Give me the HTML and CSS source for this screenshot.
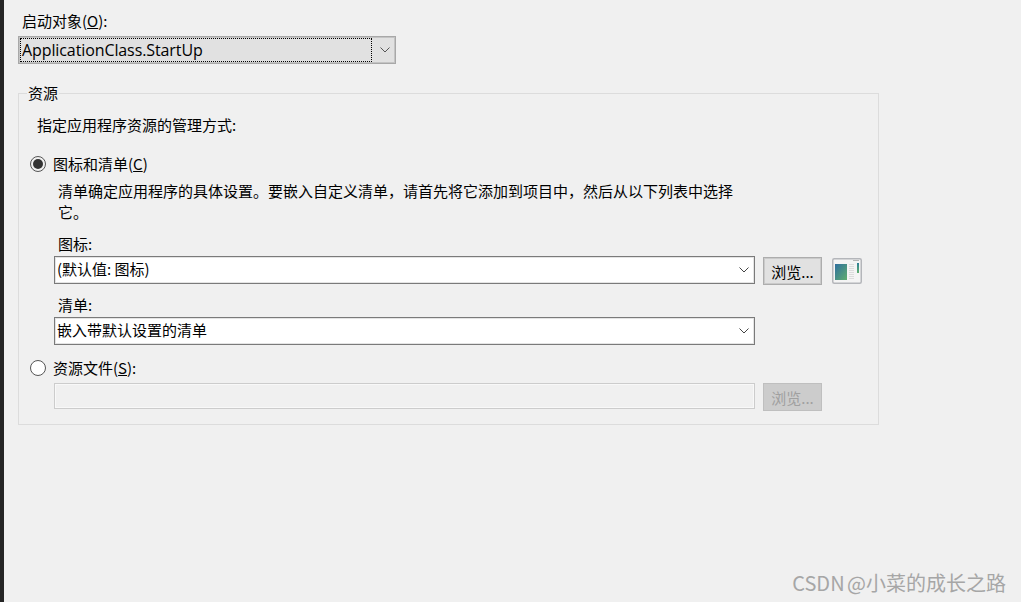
FILE: index.html
```html
<!DOCTYPE html>
<html lang="zh-CN">
<head>
<meta charset="utf-8">
<title>资源</title>
<link rel="stylesheet" href="styles.css">
</head>
<body>
<main class="page">
  <label class="label startup-label">启动对象(<u>O</u>):</label>
  <div class="startup-combo">
    <span class="focus-box">ApplicationClass.StartUp</span>
    <svg class="chevron" width="10" height="6" viewBox="0 0 10 6"><path d="M.5.5l4.500 4.500 4.500-4.500" fill="none" stroke="#555" stroke-width="1"/></svg>
  </div>
  <fieldset class="group">
    <legend class="legend">资源</legend>
    <p class="label intro">指定应用程序资源的管理方式:</p>
    <div class="radio-row first-radio">
      <span class="radio checked"></span>
      <span class="label">图标和清单(<u>C</u>)</span>
    </div>
    <div class="indented">
      <p class="label desc">清单确定应用程序的具体设置。要嵌入自定义清单，请首先将它添加到项目中，然后从以下列表中选择它。</p>
      <div class="label field-label icon-label">图标:</div>
      <div class="field-row">
        <div class="combo">
          <span class="combo-text">(默认值: 图标)</span>
          <svg class="chevron" width="10" height="6" viewBox="0 0 10 6"><path d="M.5.5l4.500 4.500 4.500-4.500" fill="none" stroke="#444" stroke-width="1"/></svg>
        </div>
        <button class="browse" type="button">浏览...</button>
        <svg class="preview" width="30" height="26" viewBox="0 0 30 26">
          <defs>
            <linearGradient id="g" x1="0" y1="0" x2="1" y2="1">
              <stop offset="0" stop-color="#2f6f9f"/>
              <stop offset="1" stop-color="#5fae6e"/>
            </linearGradient>
            <linearGradient id="h" x1="0" y1="0" x2="0" y2="1">
              <stop offset="0" stop-color="#2f7f96"/>
              <stop offset="1" stop-color="#5fae6e"/>
            </linearGradient>
          </defs>
          <rect x="0.75" y="0.75" width="28.500" height="24.500" rx="1.500" fill="#f4f4f4" stroke="#b4b6ba" stroke-width="1.500"/>
          <rect x="3" y="6" width="12" height="16" fill="url(#g)"/>
          <path d="M17 6.500h5M17 8.500h5M17 10.500h5M17 12.500h5M17 14.500h5M17 16.500h5M17 18.500h5M17 20.500h5" stroke="#dcdcdc" stroke-width="1"/>
          <rect x="25" y="5" width="2" height="10" fill="url(#h)"/>
          <rect x="21" y="2" width="6" height="1" fill="#b5b5b5"/>
        </svg>
      </div>
      <div class="label field-label manifest-label">清单:</div>
      <div class="field-row">
        <div class="combo">
          <span class="combo-text">嵌入带默认设置的清单</span>
          <svg class="chevron" width="10" height="6" viewBox="0 0 10 6"><path d="M.5.5l4.500 4.500 4.500-4.500" fill="none" stroke="#444" stroke-width="1"/></svg>
        </div>
      </div>
    </div>
    <div class="radio-row second-radio">
      <span class="radio"></span>
      <span class="label">资源文件(<u>S</u>):</span>
    </div>
    <div class="indented">
      <div class="field-row disabled-row">
        <div class="text-disabled"></div>
        <button class="browse disabled" type="button" disabled>浏览...</button>
      </div>
    </div>
  </fieldset>
  <div class="watermark">CSDN @小菜的成长之路</div>
</main>
</body>
</html>
```

FILE: styles.css
```css
* { box-sizing: border-box; }
html, body { margin: 0; height: 100%; }
body {
  background: #f0f0f0;
  color: #000;
  font-family: "Open Sans", "Noto Sans CJK SC", sans-serif;
  font-size: 15px;
  overflow: hidden;
}
.page {
  position: relative;
  height: 602px;
  border-left: 4px solid #252525;
  padding: 11px 0 0 14px;
}
.label {
  display: block;
  margin: 0;
  font-size: 15px;
  line-height: 20px;
  font-family: "Noto Sans CJK SC", sans-serif;
}
.startup-label { padding-left: 4px; }
.startup-combo {
  display: flex;
  align-items: center;
  width: 378px;
  height: 28px;
  margin-top: 5px;
  padding-left: 1px;
  background: #e1e1e1;
  border: 1px solid #a8a8a8;
  box-shadow: inset 0 0 0 1px #c4c4c4;
}
.focus-box {
  display: block;
  width: 352px;
  height: 24px;
  padding-left: 2px;
  outline: 1px dotted #000;
  outline-offset: -1px;
  font-size: 16px;
  line-height: 24px;
  letter-spacing: -0.1px;
}
.chevron { flex: none; }
.startup-combo .chevron { margin-left: 8px; }
.group {
  width: 861px;
  height: 341px;
  margin: 20px 0 0;
  padding: 0 0 0 18px;
  border: 1px solid #dcdcdc;
  position: relative;
}
.legend {
  margin-left: -10px;
  padding: 0 1px;
  font-family: "Noto Sans CJK SC", sans-serif;
  font-size: 15px;
  line-height: 18px;
}
.intro { margin-top: 13px; }
.radio-row {
  display: flex;
  align-items: center;
  gap: 7px;
  margin-left: -7px;
}
.first-radio { margin-top: 19px; }
.second-radio { margin-top: 13px; }
.radio {
  width: 16px;
  height: 16px;
  flex: none;
  border-radius: 50%;
  border: 1px solid #555;
  background: #fff;
  position: relative;
}
.radio.checked { background: #f0f0f0; }
.radio.checked::after {
  content: "";
  position: absolute;
  inset: 2px;
  border-radius: 50%;
  background: #333;
}
.indented { padding-left: 17px; margin-left: 0; }
.desc {
  width: 680px;
  margin: 6px 0 0 4px;
  line-height: 21px;
}
.field-label { padding-left: 4px; }
.icon-label { margin-top: 12px; }
.manifest-label { margin-top: 10px; }
.field-row {
  display: flex;
  align-items: flex-start;
  margin-top: 2px;
}
.combo {
  display: flex;
  align-items: center;
  justify-content: space-between;
  width: 701px;
  height: 28px;
  padding: 0 5px 0 2px;
  background: #fff;
  border: 1px solid #7a7a7a;
  box-shadow: inset 0 0 0 1px #e4e4e4;
  font-family: "Noto Sans CJK SC", sans-serif;
  font-size: 15px;
}
.combo-text { margin-bottom: 3px; }
.browse {
  width: 59px;
  height: 28px;
  margin: 1px 0 0 8px;
  padding: 0;
  background: #e1e1e1;
  border: 1px solid #adadad;
  box-shadow: inset 0 0 0 1px #cacaca;
  color: #000;
  font-family: "Noto Sans CJK SC", sans-serif;
  font-size: 15px;
}
.preview { margin: 2px 0 0 10px; flex: none; }
.disabled-row { margin-top: 5px; }
.text-disabled {
  width: 701px;
  height: 26px;
  background: #f0f0f0;
  border: 1px solid #cccccc;
  box-shadow: inset 0 0 0 1px #f8f8f8;
}
.browse.disabled {
  height: 28px;
  margin-top: 0;
  background: #cccccc;
  border-color: #bfbfbf;
  box-shadow: none;
  color: #a0a0a0;
}
.watermark {
  position: absolute;
  right: 15px;
  bottom: 7px;
  color: #a6a6a6;
  font-family: "Noto Sans CJK SC", sans-serif;
  font-size: 20px;
  line-height: 24px;
  word-spacing: -2px;
}
```
